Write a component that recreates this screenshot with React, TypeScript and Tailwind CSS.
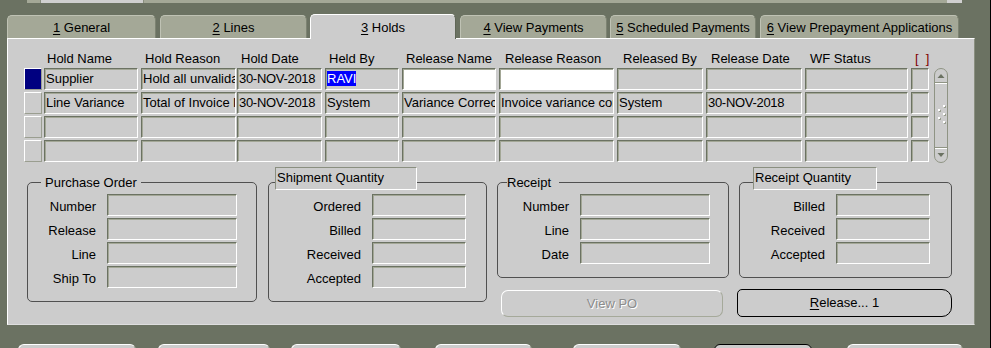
import React from "react";

const FONT = "font-['Liberation_Sans',Arial,sans-serif]";

const fieldBase =
  "h-[22px] shrink-0 border border-t-[#6b7262] border-l-[#6b7262] border-b-white border-r-white shadow-[inset_1px_1px_0_#a3a796] overflow-hidden whitespace-nowrap leading-[20px] pl-[1px] text-black";

const colW = [
  "w-[94px]",
  "w-[95px]",
  "w-[85px] -ml-[2px]",
  "w-[74px]",
  "w-[94px]",
  "w-[115px]",
  "w-[86px]",
  "w-[96px]",
  "w-[103px]",
  "w-[18px]",
];

const dateCols = [2, 7];

const headers: { t: React.ReactNode; c: string }[] = [
  { t: "Hold Name", c: "pl-[3px]" },
  { t: "Hold Reason", c: "pl-[4px]" },
  { t: "Hold Date", c: "pl-[4px]" },
  { t: "Held By", c: "pl-[4px]" },
  { t: "Release Name", c: "pl-[4px]" },
  { t: "Release Reason", c: "pl-[6px]" },
  { t: "Released By", c: "pl-[6px]" },
  { t: "Release Date", c: "pl-[5px]" },
  { t: "WF Status", c: "pl-[5px]" },
  { t: <span className="text-[#800000]">[{"\u00a0\u00a0"}]</span>, c: "pl-[4px]" },
];

type Row = { cells: React.ReactNode[]; white: number[]; current?: boolean };

const rows: Row[] = [
  {
    current: true,
    white: [4, 5],
    cells: [
      "Supplier",
      "Hold all unvalidated invoices",
      "30-NOV-2018",
      <span className="bg-[#0000ff] text-white">RAVI</span>,
      "",
      "",
      "",
      "",
      "",
      "",
    ],
  },
  {
    white: [],
    cells: [
      "Line Variance",
      "Total of Invoice lines exceeds",
      "30-NOV-2018",
      "System",
      "Variance Corrected",
      "Invoice variance corrected",
      "System",
      "30-NOV-2018",
      "",
      "",
    ],
  },
  { white: [], cells: ["", "", "", "", "", "", "", "", "", ""] },
  { white: [], cells: ["", "", "", "", "", "", "", "", "", ""] },
];

function Tab({
  num,
  rest,
  w,
  active,
}: {
  num: string;
  rest: string;
  w: string;
  active?: boolean;
}) {
  if (active) {
    return (
      <div
        className={`${w} h-[25px] -mb-[1px] relative z-10 bg-[#cccccc] rounded-t-[5px] border-t border-l border-white border-r border-r-[#5f6656] text-center leading-[15px] pt-[5px] text-black`}
      >
        <span className="underline underline-offset-2">{num}</span>
        {rest}
      </div>
    );
  }
  return (
    <div
      className={`${w} h-[23px] bg-[#a4a897] rounded-t-[5px] border-t border-l border-t-[#bfc2b4] border-l-[#bfc2b4] border-r border-r-[#7d8372] text-center leading-[15px] pt-[4px] text-black`}
    >
      <span className="underline underline-offset-2">{num}</span>
      {rest}
    </div>
  );
}

function Scrollbar() {
  return (
    <div className="ml-[5px] w-[14px] h-[95px] rounded-[7px] border border-[#8f9484] overflow-hidden">
      <svg width="12" height="93" viewBox="0 0 12 93">
        <polygon points="2.5,9 6,5 9.5,9" fill="#6b7262" />
        <line x1="0" y1="13.5" x2="12" y2="13.5" stroke="#8f9484" />
        <line x1="0" y1="14.5" x2="12" y2="14.5" stroke="#ffffff" />
        {[
          [8, 36],
          [3, 40],
          [8, 44],
          [3, 48],
          [8, 52],
        ].map(([x, y], i) => (
          <g key={i}>
            <rect x={x + 1} y={y + 1} width="2" height="2" fill="#9a9e90" />
            <rect x={x} y={y} width="2" height="2" fill="#ffffff" />
          </g>
        ))}
        <line x1="0" y1="78.5" x2="12" y2="78.5" stroke="#8f9484" />
        <line x1="0" y1="79.5" x2="12" y2="79.5" stroke="#ffffff" />
        <polygon points="2.5,84 6,88 9.5,84" fill="#6b7262" />
      </svg>
    </div>
  );
}

function FormRow({
  label,
  labelW,
  fieldW,
}: {
  label: string;
  labelW: string;
  fieldW: string;
}) {
  return (
    <div className="flex items-center h-[22px]">
      <span className={`${labelW} text-right leading-[15px] pt-[2px] text-black`}>{label}</span>
      <div className={`${fieldBase} ${fieldW} ml-[11px]`} />
    </div>
  );
}

function Group({
  w,
  h,
  title,
  labels,
  labelW,
  fieldW,
}: {
  w: string;
  h: string;
  title: React.ReactNode;
  labels: string[];
  labelW: string;
  fieldW: string;
}) {
  return (
    <div className={`${w} ${h} relative shrink-0 border border-[#505050] rounded-[5px]`}>
      {title}
      <div className="flex flex-col gap-[2px] pt-[11px]">
        {labels.map((l) => (
          <FormRow key={l} label={l} labelW={labelW} fieldW={fieldW} />
        ))}
      </div>
    </div>
  );
}

export default function App() {
  const bottomBtns = [
    { c: "ml-[18px] w-[118px]", dark: false },
    { c: "ml-[22px] w-[112px]", dark: false },
    { c: "ml-[21px] w-[110px]", dark: false },
    { c: "ml-[34px] w-[97px]", dark: false },
    { c: "ml-[41px] w-[108px]", dark: false },
    { c: "ml-[33px] w-[98px]", dark: true },
    { c: "ml-[35px] w-[116px]", dark: false },
  ];

  return (
    <div
      className={`${FONT} text-[13px] w-[991px] h-[348px] overflow-hidden bg-[#6b7262] border-r border-black`}
    >
      {/* top strip */}
      <div className="h-[3px] flex">
        <div className="ml-[27px] w-[935px] h-[3px] bg-[#a4a897] flex">
          <div className="ml-[13px] w-[104px] h-[3px] bg-[#d0d0d0] border-l border-r border-[#8a8f80]" />
          <div className="ml-auto w-[15px] h-[3px] bg-[#d0d0d0]" />
        </div>
      </div>

      {/* tabs */}
      <div className="mt-[11px] h-[24px] flex items-end pl-[7px]">
        <Tab num="1" rest=" General" w="w-[149px]" />
        <div className="w-[4px]" />
        <Tab num="2" rest=" Lines" w="w-[147px]" />
        <div className="w-[3px]" />
        <Tab num="3" rest=" Holds" w="w-[146px]" active />
        <div className="w-[4px]" />
        <Tab num="4" rest=" View Payments" w="w-[147px]" />
        <div className="w-[3px]" />
        <Tab num="5" rest=" Scheduled Payments" w="w-[146px]" />
        <div className="w-[4px]" />
        <Tab num="6" rest=" View Prepayment Applications" w="w-[199px]" />
      </div>

      {/* panel */}
      <div className="ml-[7px] w-[968px] h-[287px] bg-[#cccccc] border-t border-l border-white border-r border-r-[#8a8f80] border-b border-b-[#dedede] pt-[12px] pl-[16px]">
        {/* table header */}
        <div className="flex gap-[3px] h-[15px] leading-[15px] text-black">
          <div className="w-[18px] shrink-0 -mr-[1px]" />
          {headers.map((h, i) => (
            <div key={i} className={`${colW[i]} ${h.c} shrink-0 whitespace-nowrap`}>
              {h.t}
            </div>
          ))}
        </div>

        {/* rows + scrollbar */}
        <div className="mt-[2px] flex">
          <div className="flex flex-col gap-[2px]">
            {rows.map((r, ri) => (
              <div key={ri} className="flex gap-[3px]">
                <div
                  className={`w-[18px] h-[22px] shrink-0 -mr-[1px] border border-t-white border-l-white border-b-[#9a9e90] border-r-[#9a9e90] ${
                    r.current ? "bg-[#000080]" : "bg-[#cccccc]"
                  }`}
                />
                {r.cells.map((c, ci) => (
                  <div
                    key={ci}
                    className={`${fieldBase} ${colW[ci]} ${
                      dateCols.includes(ci) ? "tracking-[-0.3px]" : ""
                    } ${r.white.includes(ci) ? "bg-white" : "bg-[#cccccc]"}`}
                  >
                    {c}
                  </div>
                ))}
              </div>
            ))}
          </div>
          <Scrollbar />
        </div>

        {/* bottom section */}
        <div className="mt-[4px] flex items-start pl-[3px]">
          <div className="pt-[15px]">
            <Group
              w="w-[230px]"
              h="h-[120px]"
              labelW="w-[68px]"
              fieldW="w-[130px]"
              labels={["Number", "Release", "Line", "Ship To"]}
              title={
                <div className="absolute -top-[8px] left-[13px] bg-[#cccccc] px-[4px] leading-[15px] text-black">
                  Purchase Order
                </div>
              }
            />
          </div>
          <div className="pt-[15px] ml-[11px]">
            <Group
              w="w-[219px]"
              h="h-[120px]"
              labelW="w-[92px]"
              fieldW="w-[94px]"
              labels={["Ordered", "Billed", "Received", "Accepted"]}
              title={
                <div className="absolute -top-[16px] left-[6px] w-[142px] h-[23px] bg-[#cccccc] border border-t-[#8a8f80] border-l-[#8a8f80] border-b-white border-r-white pl-[1px] pt-[2px] leading-[15px] text-black">
                  Shipment Quantity
                </div>
              }
            />
          </div>
          <div className="pt-[15px] ml-[10px] flex flex-col">
            <div className="flex">
              <Group
                w="w-[232px]"
                h="h-[96px]"
                labelW="w-[71px]"
                fieldW="w-[130px]"
                labels={["Number", "Line", "Date"]}
                title={
                  <div className="absolute -top-[8px] left-[9px] bg-[#cccccc] pr-[8px] leading-[15px] text-black">
                    Receipt
                  </div>
                }
              />
              <div className="ml-[10px]">
                <Group
                  w="w-[213px]"
                  h="h-[96px]"
                  labelW="w-[85px]"
                  fieldW="w-[94px]"
                  labels={["Billed", "Received", "Accepted"]}
                  title={
                    <div className="absolute -top-[16px] left-[13px] w-[124px] h-[23px] bg-[#cccccc] border border-t-[#8a8f80] border-l-[#8a8f80] border-b-white border-r-white pl-[1px] pt-[2px] leading-[15px] text-black">
                      Receipt Quantity
                    </div>
                  }
                />
              </div>
            </div>
            <div className="mt-[12px] flex items-start">
              <div className="ml-[4px] w-[222px] h-[27px] rounded-[7px] border border-t-white border-l-white border-b-[#a5a99a] border-r-[#a5a99a] flex items-center justify-center text-[#8c8c8c] [text-shadow:1px_1px_0_#ffffff]">
                View PO
              </div>
              <div className="ml-[14px] -mt-[1px] w-[215px] h-[28px] rounded-l-[5px] rounded-r-[10px] border border-black flex items-center justify-center text-black">
                <span>
                  <span className="underline underline-offset-2">R</span>elease... 1
                </span>
              </div>
            </div>
          </div>
        </div>
      </div>

      {/* bottom buttons, cut off */}
      <div className="mt-[19px] flex">
        {bottomBtns.map((b, i) => (
          <div
            key={i}
            className={`${b.c} h-[24px] shrink-0 rounded-t-[6px] bg-[#cccccc] border ${
              b.dark ? "border-black" : "border-t-white border-l-white border-r-[#a5a99a] border-b-[#a5a99a]"
            }`}
          />
        ))}
      </div>
    </div>
  );
}
